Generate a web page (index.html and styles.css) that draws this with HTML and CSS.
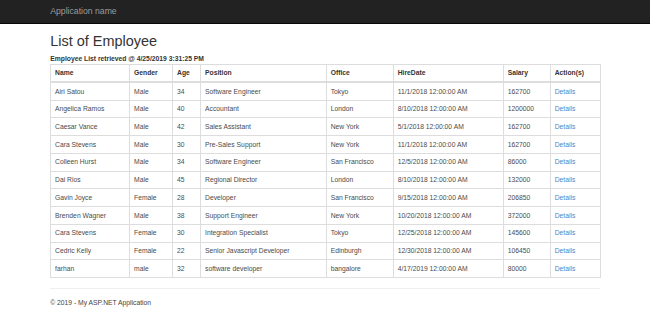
FILE: index.html
```html
<!DOCTYPE html>
<html lang="en">
<head>
<meta charset="utf-8">
<title>List of Employee</title>
<link rel="stylesheet" href="styles.css">
</head>
<body>
<header class="navbar">
  <div class="container">
    <a class="brand" href="#">Application name</a>
  </div>
</header>
<main class="container body-content">
  <h2 class="title">List of Employee</h2>
  <p class="retrieved">Employee List retrieved @ 4/25/2019 3:31:25 PM</p>
  <table class="grid">
    <colgroup>
      <col class="c-name"><col class="c-gender"><col class="c-age"><col class="c-pos"><col class="c-office"><col class="c-hire"><col class="c-salary"><col class="c-action">
    </colgroup>
    <thead>
      <tr><th>Name</th><th>Gender</th><th>Age</th><th>Position</th><th>Office</th><th>HireDate</th><th>Salary</th><th>Action(s)</th></tr>
    </thead>
    <tbody>
      <tr><td>Airi Satou</td><td>Male</td><td>34</td><td>Software Engineer</td><td>Tokyo</td><td>11/1/2018 12:00:00 AM</td><td>162700</td><td><a href="#">Details</a></td></tr>
      <tr><td>Angelica Ramos</td><td>Male</td><td>40</td><td>Accountant</td><td>London</td><td>8/10/2018 12:00:00 AM</td><td>1200000</td><td><a href="#">Details</a></td></tr>
      <tr><td>Caesar Vance</td><td>Male</td><td>42</td><td>Sales Assistant</td><td>New York</td><td>5/1/2018 12:00:00 AM</td><td>162700</td><td><a href="#">Details</a></td></tr>
      <tr><td>Cara Stevens</td><td>Male</td><td>30</td><td>Pre-Sales Support</td><td>New York</td><td>11/1/2018 12:00:00 AM</td><td>162700</td><td><a href="#">Details</a></td></tr>
      <tr><td>Colleen Hurst</td><td>Male</td><td>34</td><td>Software Engineer</td><td>San Francisco</td><td>12/5/2018 12:00:00 AM</td><td>86000</td><td><a href="#">Details</a></td></tr>
      <tr><td>Dai Rios</td><td>Male</td><td>45</td><td>Regional Director</td><td>London</td><td>8/10/2018 12:00:00 AM</td><td>132000</td><td><a href="#">Details</a></td></tr>
      <tr><td>Gavin Joyce</td><td>Female</td><td>28</td><td>Developer</td><td>San Francisco</td><td>9/15/2018 12:00:00 AM</td><td>206850</td><td><a href="#">Details</a></td></tr>
      <tr><td>Brenden Wagner</td><td>Male</td><td>38</td><td>Support Engineer</td><td>New York</td><td>10/20/2018 12:00:00 AM</td><td>372000</td><td><a href="#">Details</a></td></tr>
      <tr><td>Cara Stevens</td><td>Female</td><td>30</td><td>Integration Specialist</td><td>Tokyo</td><td>12/25/2018 12:00:00 AM</td><td>145600</td><td><a href="#">Details</a></td></tr>
      <tr><td>Cedric Kelly</td><td>Female</td><td>22</td><td>Senior Javascript Developer</td><td>Edinburgh</td><td>12/30/2018 12:00:00 AM</td><td>106450</td><td><a href="#">Details</a></td></tr>
      <tr><td>farhan</td><td>male</td><td>32</td><td>software developer</td><td>bangalore</td><td>4/17/2019 12:00:00 AM</td><td>80000</td><td><a href="#">Details</a></td></tr>
    </tbody>
  </table>
  <hr class="rule">
  <footer class="footer">
    <p>&copy; 2019 - My ASP.NET Application</p>
  </footer>
</main>
</body>
</html>
```
FILE: styles.css
```css
html, body {
  margin: 0;
  padding: 0;
}
body {
  background: #fff;
  color: #333;
  font-family: "Liberation Sans", Arial, Helvetica, sans-serif;
  font-size: 6.75px;
  line-height: 9.64px;
}
.container {
  box-sizing: border-box;
  width: 564px;
  margin: 0 auto;
  padding: 0 7.25px;
}
.navbar {
  box-sizing: border-box;
  height: 24px;
  background: #222;
  border-bottom: 1px solid #080808;
}
.brand {
  display: block;
  padding: 7.23px 0;
  font-size: 8.67px;
  line-height: 9.64px;
  color: #9d9d9d;
  text-decoration: none;
}
.title {
  margin: 9.64px 0 4.82px;
  font-size: 14.46px;
  font-weight: 500;
  line-height: 1.1;
  color: #333;
}
.retrieved {
  margin: 0;
  font-weight: bold;
}
.grid {
  width: 549.5px;
  table-layout: fixed;
  border-collapse: collapse;
  border: 1px solid #ddd;
  margin-bottom: 9.64px;
}
.c-name { width: 79px; }
.c-gender { width: 43px; }
.c-age { width: 28px; }
.c-pos { width: 125.6px; }
.c-office { width: 67px; }
.c-hire { width: 110px; }
.c-salary { width: 47px; }
.c-action { width: 49.9px; }
.grid th,
.grid td {
  border: 1px solid #ddd;
  text-align: left;
  vertical-align: top;
  line-height: 9.64px;
  white-space: nowrap;
  overflow: hidden;
}
.grid th {
  padding: 3.18px 3.86px;
  font-weight: bold;
  border-bottom-width: 2px;
}
.grid td {
  padding: 3.55px 3.86px;
  color: #4a4a4a;
}
.grid a {
  color: #4a86c5;
  text-decoration: none;
}
.rule {
  margin: 0 0 9.64px;
  border: 0;
  border-top: 1px solid #eee;
}
.footer p {
  margin: 0 0 4.82px;
  color: #444;
}
```
